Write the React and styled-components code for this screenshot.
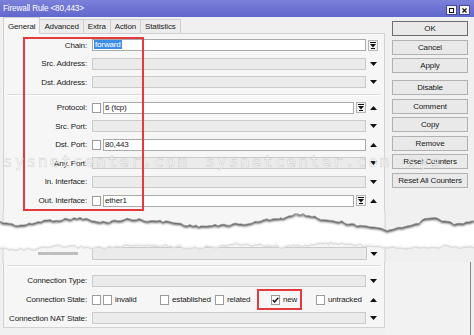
import React from "react";
import styled, { createGlobalStyle } from "styled-components";

const GlobalStyle = createGlobalStyle`
  html, body {
    margin: 0;
    padding: 0;
    background: #fff;
  }
  body {
    font-family: "Liberation Sans", Arial, sans-serif;
    font-size: 8px;
    letter-spacing: -0.15px;
    color: #1a1a1a;
  }
`;

const Page = styled.div`
  width: 474px;
  height: 335px;
  overflow: hidden;
  background: #fff;
`;

const Top = styled.div`
  position: relative;
  height: 212px;
  display: flex;
  flex-direction: column;
  background: #f0f0f0;
`;

const TitleBar = styled.div`
  height: 17px;
  flex: none;
  display: flex;
  align-items: center;
  justify-content: space-between;
  padding: 0 4px 0 3px;
  background: linear-gradient(#7b80da, #6267cd);
  color: #fff;
  font-size: 8.2px;
`;

const WinButtons = styled.div`
  display: flex;
  gap: 2px;
  margin-top: 3px;
`;

const WinButton = styled.div`
  width: 9px;
  height: 8px;
  background: #f4f4f4;
  border: 1px solid #44489e;
  display: flex;
  align-items: center;
  justify-content: center;
`;

const Body = styled.div`
  flex: 1;
  display: flex;
`;

const Main = styled.div`
  width: 382px;
  margin-left: 3px;
  display: flex;
  flex-direction: column;
`;

const Tabs = styled.div`
  height: 16px;
  display: flex;
  align-items: flex-end;
`;

const Tab = styled.div`
  height: ${(p) => (p.$active ? 17 : 14)}px;
  margin-bottom: ${(p) => (p.$active ? -1 : 0)}px;
  padding: 0 4px;
  display: flex;
  align-items: center;
  box-sizing: border-box;
  border: 1px solid #cfcfcf;
  border-bottom: none;
  margin-right: -1px;
  background: ${(p) => (p.$active ? "#f6f6f6" : "#ececec")};
  position: relative;
  z-index: ${(p) => (p.$active ? 2 : 1)};
`;

const Panel = styled.div`
  position: relative;
  flex: 1;
  background: #f6f6f6;
  border: 1px solid #d2d2d2;
  border-bottom: none;
  padding-top: 2px;
  ${(p) => p.$lower && "border-top: none; border-bottom: 1px solid #d2d2d2; padding-top: 3px;"}
`;

const Row = styled.div`
  height: 18.6px;
  display: flex;
  align-items: center;
`;

const Label = styled.div`
  width: 83px;
  margin-right: 5px;
  text-align: right;
  white-space: nowrap;
  flex: none;
`;

const Field = styled.div`
  width: 274px;
  flex: none;
  display: flex;
  align-items: center;
  gap: 2px;
`;

const Input = styled.div`
  flex: 1;
  height: 12px;
  box-sizing: border-box;
  border: 1px solid ${(p) => (p.$disabled ? "#cbcbcb" : "#a9a9a9")};
  background: ${(p) => (p.$disabled ? "#ebebeb" : "#fff")};
  line-height: 10px;
  padding-left: 1px;
  white-space: nowrap;
  overflow: hidden;
`;

const Selected = styled.span`
  background: #3d8ee6;
  color: #fff;
  padding: 0 1px;
`;

const Check = styled.div`
  width: 9px;
  height: 10px;
  flex: none;
  box-sizing: border-box;
  border: 1px solid #9c9c9c;
  background: #fff;
  display: flex;
  align-items: center;
  justify-content: center;
`;

const DropBox = styled.div`
  width: 10px;
  height: 11px;
  flex: none;
  box-sizing: border-box;
  border: 1px solid #b5b5b5;
  background: #f2f2f2;
  display: flex;
  align-items: center;
  justify-content: center;
`;

const ArrowSlot = styled.div`
  width: 14px;
  flex: none;
  display: flex;
  justify-content: center;
  align-items: center;
`;

const Separator = styled.div`
  height: 1px;
  margin: ${(p) => p.$margin};
  background: #dcdcdc;
  border-bottom: 1px solid #fff;
`;

const Highlight = styled.div`
  position: absolute;
  left: 19px;
  top: 3px;
  width: 121px;
  height: 174px;
  box-sizing: border-box;
  border: 2px solid #e23a3f;
  pointer-events: none;
`;

const Side = styled.div`
  flex: 1;
  display: flex;
  flex-direction: column;
  gap: 3.5px;
  padding: 4px 0 0 7px;
`;

const SideButton = styled.div`
  width: 76px;
  height: 15px;
  box-sizing: border-box;
  border: 1px solid ${(p) => (p.$primary ? "#6e6e6e" : "#b1b1b1")};
  background: #e9e9e9;
  display: flex;
  align-items: center;
  justify-content: center;
  white-space: nowrap;
  margin-top: ${(p) => (p.$spaced ? 3.5 : 0)}px;
`;

const Watermark = styled.div`
  position: absolute;
  left: 3px;
  top: 152px;
  display: flex;
  gap: 16px;
  font-family: "DejaVu Sans Mono", monospace;
  font-size: 16px;
  letter-spacing: 2px;
  color: rgba(255, 255, 255, 0.75);
  -webkit-text-stroke: 0.5px rgba(110, 110, 110, 0.35);
  white-space: nowrap;
  pointer-events: none;
`;

const Bottom = styled.div`
  height: 73px;
  display: flex;
  background: #f0f0f0;
`;

const LowerMain = styled.div`
  width: 382px;
  height: 66px;
  margin-left: 3px;
  display: flex;
  flex-direction: column;
`;

const LowerSide = styled.div`
  flex: 1;
  border-right: 1px solid #8a8a8a;
  margin-right: 3px;
  background: #f2f2f2;
`;

const Choice = styled.div`
  display: flex;
  align-items: center;
  gap: 3px;
  flex: none;
  width: ${(p) => p.$w}px;
  margin-left: ${(p) => p.$gap || 0}px;
  box-sizing: border-box;
  ${(p) =>
    p.$marked &&
    `
    height: 21px;
    margin-top: -2px;
    margin-bottom: -2px;
    border: 2px solid #e23a3f;
    padding-left: 12px;
  `}
`;

const TearSvg = styled.svg`
  display: block;
`;

const Down = () => (
  <svg width="7" height="4" viewBox="0 0 7 4">
    <path d="M0 0h7L3.5 4z" fill="#111" />
  </svg>
);

const Up = () => (
  <svg width="7" height="4" viewBox="0 0 7 4">
    <path d="M0 4h7L3.5 0z" fill="#111" />
  </svg>
);

const ListIcon = () => (
  <svg width="6" height="7" viewBox="0 0 6 7">
    <path d="M0 0.5h6" stroke="#111" strokeWidth="1" />
    <path d="M0 2h6L3 5.5z" fill="#111" />
    <path d="M1 6.5h4" stroke="#111" strokeWidth="1" />
  </svg>
);

const Tick = () => (
  <svg width="7" height="6" viewBox="0 0 7 6">
    <path d="M0.8 3l1.8 2L6.3 0.8" stroke="#111" strokeWidth="1.4" fill="none" />
  </svg>
);

function rnd(i, seed) {
  const v = Math.sin(i * 12.9898 + seed * 78.233) * 43758.5453;
  return v - Math.floor(v);
}

// torn-paper edge: smooth curve through the key points plus jitter
function edge(points, seed, amp) {
  const out = [];
  let i = 0;
  for (let k = 0; k < points.length - 1; k++) {
    const [x0, y0] = points[k];
    const [x1, y1] = points[k + 1];
    for (let x = x0; x < x1; x += 3) {
      const t = (x - x0) / (x1 - x0);
      const s = (1 - Math.cos(t * Math.PI)) / 2;
      out.push([x, y0 + (y1 - y0) * s + (rnd(i++, seed) - 0.5) * amp]);
    }
  }
  out.push(points[points.length - 1]);
  return out;
}

const topEdge = edge(
  [[0, 10], [20, 13], [50, 8], [80, 6], [100, 10], [130, 7], [160, 9], [200, 14], [240, 12], [280, 6], [300, 2], [330, 8], [360, 13], [390, 18], [410, 14], [430, 6], [460, 12], [474, 9]],
  1,
  2.2
);

const lowEdge = edge(
  [[0, 37], [30, 38], [60, 35], [100, 36], [150, 34], [200, 36], [240, 33], [290, 35], [330, 32], [370, 34], [400, 36], [440, 35], [474, 36]],
  3,
  3
);

const pts = (list) => list.map(([x, y]) => `${x.toFixed(1)},${y.toFixed(1)}`).join(" L");

const topPath = `M0,0 L474,0 L${pts([...topEdge].reverse())} Z`;
const lowPath = `M${pts(lowEdge)} L474,50 L0,50 Z`;

function Tear() {
  return (
    <TearSvg width="474" height="50" viewBox="0 0 474 50">
      <defs>
        <filter id="blur" x="-5%" y="-50%" width="110%" height="200%">
          <feGaussianBlur stdDeviation="1.2" />
        </filter>
        <clipPath id="topClip">
          <path d={topPath} />
        </clipPath>
        <clipPath id="lowClip">
          <path d={lowPath} />
        </clipPath>
      </defs>
      <rect width="474" height="50" fill="#fff" />
      <path d={topPath} fill="#555" transform="translate(0 2)" filter="url(#blur)" />
      <g clipPath="url(#topClip)">
        <rect width="474" height="50" fill="#f0f0f0" />
        <rect x="3" y="-1" width="382" height="60" fill="#f6f6f6" stroke="#d2d2d2" />
      </g>
      <path d={`M${pts(topEdge)}`} fill="none" stroke="#8c8c8c" strokeWidth="0.7" />
      <path d={lowPath} fill="#bbb" transform="translate(0 -1)" filter="url(#blur)" opacity="0.6" />
      <g clipPath="url(#lowClip)">
        <rect width="474" height="50" fill="#f0f0f0" />
        <rect x="3" y="-1" width="382" height="60" fill="#f6f6f6" stroke="#d2d2d2" />
        <rect x="92.5" y="35.5" width="274" height="12" fill="#ebebeb" stroke="#cbcbcb" />
        <path d="M370.5 40h7l-3.5 4z" fill="#111" />
        <rect x="38" y="40" width="40" height="3" fill="#9a9a9a" opacity="0.6" />
      </g>
      <path d={`M${pts(lowEdge)}`} fill="none" stroke="#d8d8d8" strokeWidth="0.8" />
    </TearSvg>
  );
}

const topRows = [
  { label: "Chain", kind: "chain" },
  { label: "Src. Address", kind: "off" },
  { label: "Dst. Address", kind: "off" },
  { sep: true },
  { label: "Protocol", kind: "list", value: "6 (tcp)" },
  { label: "Src. Port", kind: "off" },
  { label: "Dst. Port", kind: "check", value: "80,443" },
  { label: "Any. Port", kind: "off" },
  { label: "In. Interface", kind: "off" },
  { label: "Out. Interface", kind: "list", value: "ether1" },
];

function FormRow({ label, kind, value }) {
  if (kind === "chain") {
    return (
      <Row>
        <Label>{label}:</Label>
        <Field>
          <Input>
            <Selected>forward</Selected>
          </Input>
        </Field>
        <ArrowSlot>
          <DropBox>
            <ListIcon />
          </DropBox>
        </ArrowSlot>
      </Row>
    );
  }
  if (kind === "off") {
    return (
      <Row>
        <Label>{label}:</Label>
        <Field>
          <Input $disabled />
        </Field>
        <ArrowSlot>
          <Down />
        </ArrowSlot>
      </Row>
    );
  }
  return (
    <Row>
      <Label>{label}:</Label>
      <Field>
        <Check />
        <Input>{value}</Input>
        {kind === "list" && (
          <DropBox>
            <ListIcon />
          </DropBox>
        )}
      </Field>
      <ArrowSlot>
        <Up />
      </ArrowSlot>
    </Row>
  );
}

const buttons = [
  { text: "OK", primary: true },
  { text: "Cancel" },
  { text: "Apply" },
  { text: "Disable", spaced: true },
  { text: "Comment" },
  { text: "Copy" },
  { text: "Remove" },
  { text: "Reset Counters" },
  { text: "Reset All Counters" },
];

const states = [
  { text: "invalid", w: 55 },
  { text: "established", w: 53 },
  { text: "related", w: 40 },
  { text: "new", w: 45, on: true, marked: true },
  { text: "untracked", w: 46, gap: 12 },
];

export default function App() {
  return (
    <Page>
      <GlobalStyle />
      <Top>
        <TitleBar>
          <span>Firewall Rule &lt;80,443&gt;</span>
          <WinButtons>
            <WinButton>
              <svg width="5" height="5" viewBox="0 0 5 5">
                <rect x="0.5" y="0.5" width="4" height="4" fill="none" stroke="#111" />
              </svg>
            </WinButton>
            <WinButton>
              <svg width="5" height="5" viewBox="0 0 5 5">
                <path d="M0.5 0.5l4 4M4.5 0.5l-4 4" stroke="#111" strokeWidth="1.2" />
              </svg>
            </WinButton>
          </WinButtons>
        </TitleBar>
        <Body>
          <Main>
            <Tabs>
              {["General", "Advanced", "Extra", "Action", "Statistics"].map((t, i) => (
                <Tab key={t} $active={i === 0}>
                  {t}
                </Tab>
              ))}
            </Tabs>
            <Panel>
              {topRows.map((r, i) =>
                r.sep ? <Separator key={i} $margin="2px 3px 2.5px" /> : <FormRow key={r.label} {...r} />
              )}
              <Highlight />
            </Panel>
          </Main>
          <Side>
            {buttons.map((b) => (
              <SideButton key={b.text} $primary={b.primary} $spaced={b.spaced}>
                {b.text}
              </SideButton>
            ))}
          </Side>
        </Body>
        <Watermark>
          <span>sysnetcenter.com</span>
          <span>sysnetcenter.com</span>
          <span>sys</span>
        </Watermark>
      </Top>
      <Tear />
      <Bottom>
        <LowerMain>
          <Panel $lower>
            <Separator $margin="0 3px 4.7px" />
            <Row>
              <Label>Connection Type:</Label>
              <Field>
                <Input $disabled />
              </Field>
              <ArrowSlot>
                <Down />
              </ArrowSlot>
            </Row>
            <Row>
              <Label>Connection State:</Label>
              <Field>
                <Check />
                {states.map((s) => (
                  <Choice key={s.text} $w={s.w} $gap={s.gap} $marked={s.marked}>
                    <Check>{s.on && <Tick />}</Check>
                    <span>{s.text}</span>
                  </Choice>
                ))}
              </Field>
              <ArrowSlot>
                <Up />
              </ArrowSlot>
            </Row>
            <Row>
              <Label>Connection NAT State:</Label>
              <Field>
                <Input $disabled />
              </Field>
              <ArrowSlot>
                <Down />
              </ArrowSlot>
            </Row>
          </Panel>
        </LowerMain>
        <LowerSide />
      </Bottom>
    </Page>
  );
}
